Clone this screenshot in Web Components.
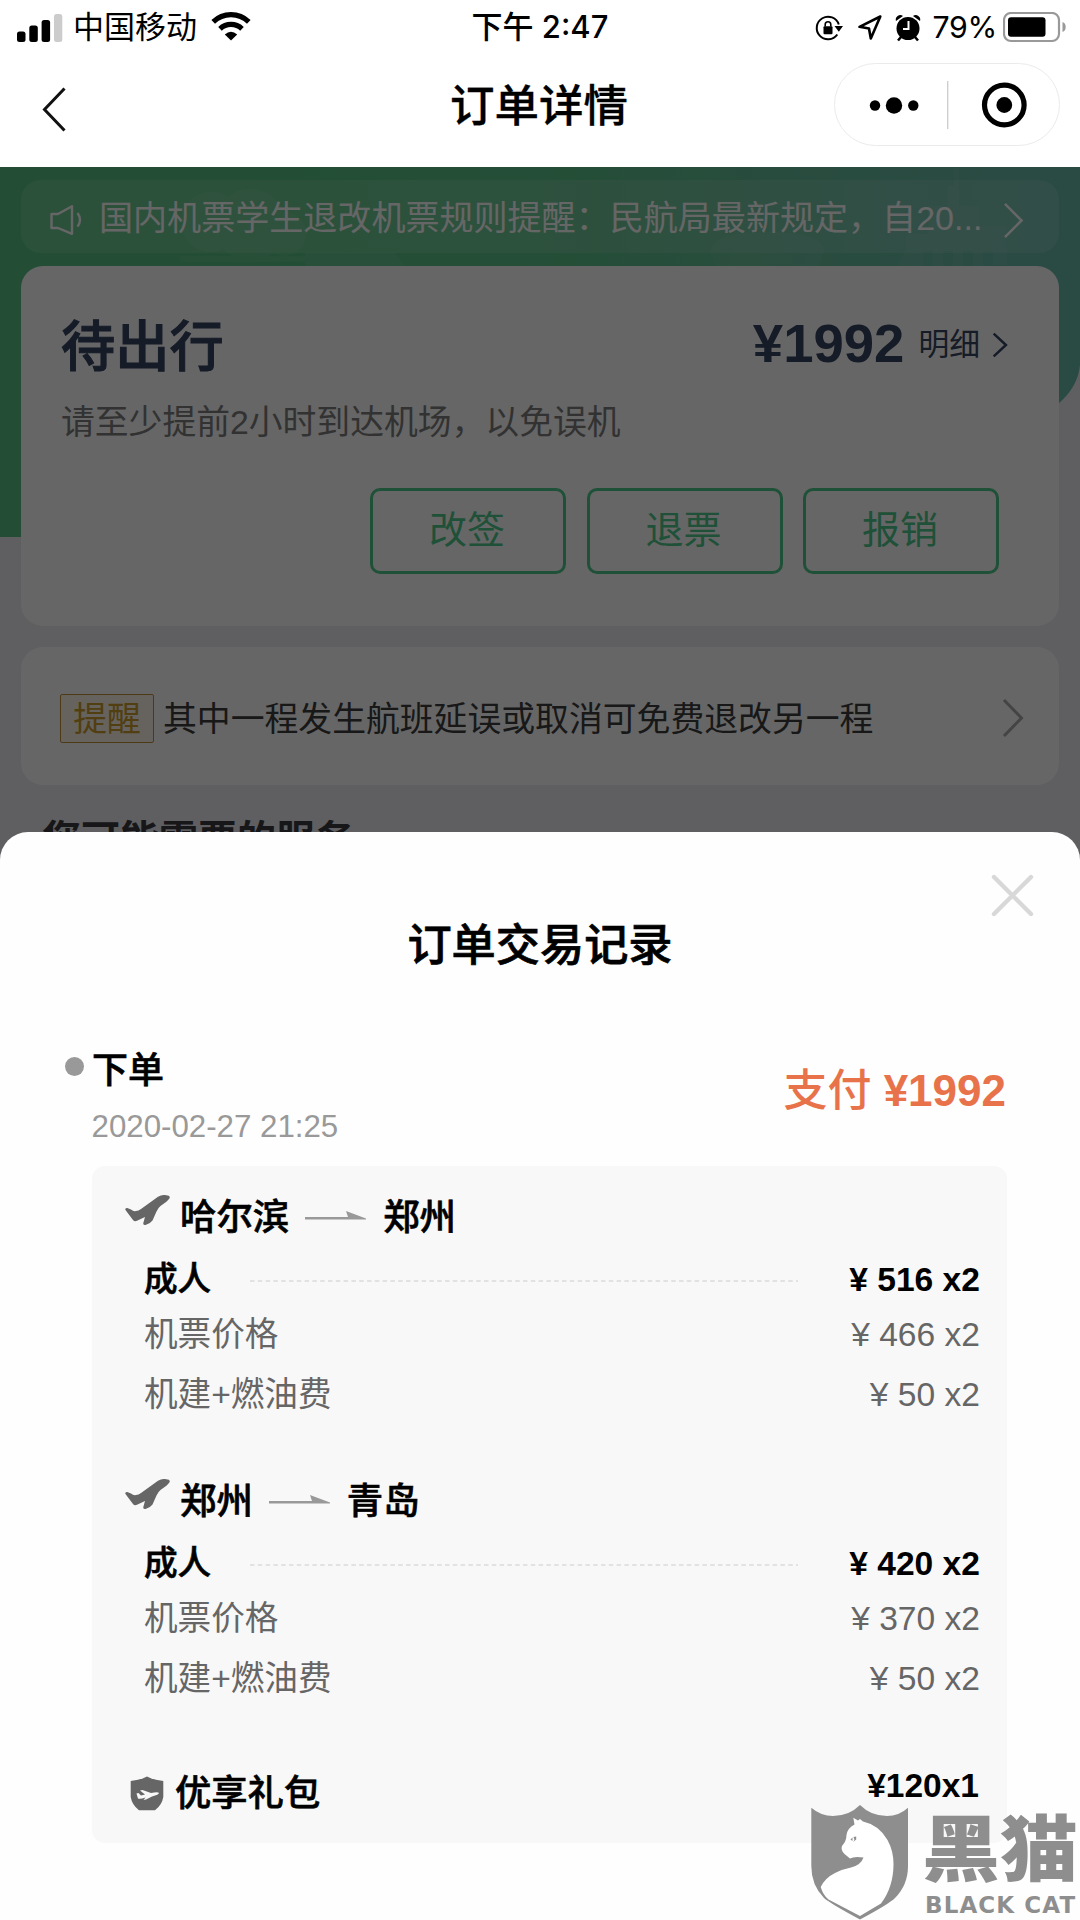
<!DOCTYPE html>
<html lang="zh-CN">
<head>
<meta charset="utf-8">
<title>订单详情</title>
<style>
html,body{margin:0;padding:0}
body{width:1080px;height:1920px;overflow:hidden;background:#fff;font-family:"Liberation Sans","Noto Sans CJK SC",sans-serif;color:#000}
</style>
</head>
<body>
<order-screen></order-screen>
<script>
const define = (name, html) => {
  const t = document.createElement('template');
  t.innerHTML = html;
  customElements.define(name, class extends HTMLElement {
    constructor() {
      super();
      this.attachShadow({ mode: 'open' }).appendChild(t.content.cloneNode(true));
    }
  });
};

define('status-bar', `
<style>
:host{display:flex;height:55px;box-sizing:border-box;padding:0 14px 0 17px;justify-content:space-between;font:400 31px/54px Inter,"Noto Sans CJK SC",sans-serif;background:#fff}
div{display:flex;align-items:center;flex:1;white-space:nowrap}
.c{justify-content:center;font-weight:500;margin-left:-3px}
.c span{margin-bottom:1px}
.r{justify-content:flex-end}
svg{display:block;flex:none}
.carrier{margin:0 14px 1px 10px}
.pct{font-size:30.300px;letter-spacing:-.3px;margin:0 6px 1px 12px}
</style>
<div>
<svg width="46" height="30" viewBox="0 0 46 30"><rect y="18.500" width="8.500" height="10.500" rx="2.500"/><rect x="12.300" y="12.500" width="8.500" height="16.500" rx="2.500"/><rect x="24.600" y="7" width="8.500" height="22" rx="2.500"/><rect x="37" y="1" width="8.300" height="28" rx="2.500" fill="#ccc"/></svg>
<span class="carrier">中国移动</span>
<svg style="margin-top:-4px" width="40" height="31" viewBox="0 0 40 31"><g fill="none" stroke="#000" stroke-width="5.200"><path d="M2.200 11.800A25.500 25.500 0 0 1 37.800 11.800"/><path d="M9 18.800A16 16 0 0 1 31 18.800"/></g><path d="M13.800 24.500Q20 19 26.200 24.500L20 30.500Z"/></svg>
</div>
<div class="c"><span>下午 2:47</span></div>
<div class="r">
<svg width="28" height="28" viewBox="0 0 28 28"><path d="M22.300 20.500A11.300 11.300 0 1 1 23.800 10.500" fill="none" stroke="#000" stroke-width="2"/><path d="M19.500 12h8.500l-4.200 5.800z"/><rect x="8.500" y="12.200" width="9" height="8" rx="1"/><path d="M10.200 12.500v-2a2.800 2.800 0 0 1 5.600 0v2" fill="none" stroke="#000" stroke-width="1.600"/></svg>
<svg style="margin-left:14px" width="26" height="27" viewBox="0 0 26 27"><path d="M23.300 2.500L2.500 12.800L12 14.500L13.800 24.500Z" fill="none" stroke="#000" stroke-width="2.600" stroke-linejoin="round"/></svg>
<svg style="margin-left:12px" width="26" height="28" viewBox="0 0 26 28"><circle cx="13" cy="14.500" r="11.500"/><path d="M1 7a4.500 4.500 0 0 1 7-5zM25 7a4.500 4.500 0 0 0-7-5z"/><path d="M6 23l-3 3.500M20 23l3 3.500" stroke="#000" stroke-width="2.500"/><path d="M13.500 7v8H8" fill="none" stroke="#fff" stroke-width="2"/></svg>
<span class="pct">79%</span>
<svg width="63" height="31" viewBox="0 0 63 31"><rect x="1" y="1" width="55" height="28" rx="7" fill="none" stroke="#999" stroke-width="2.200"/><rect x="5" y="5.200" width="37.500" height="19.500" rx="3"/><path d="M59.500 10q3.200 1 3.200 5t-3.200 5z" fill="#999"/></svg>
</div>`);

define('nav-bar', `
<style>
:host{display:flex;height:112px;box-sizing:border-box;padding:8px 20px 0 20px;background:#fff}
.side{flex:1;display:flex}
.back{align-items:flex-start;padding:24px 0 0 22px;margin-left:-22px}
.back svg{margin-left:22px}
h1{margin:0 1px 0 -1px;font-size:44.500px;line-height:88px;font-weight:500;-webkit-text-stroke:.3px currentColor}
.r{justify-content:flex-end}
.capsule{width:226px;height:83px;box-sizing:border-box;border:1.500px solid #ebebeb;border-radius:42px;display:flex;align-items:center;justify-content:center}
svg{display:block}
</style>
<div class="side back"><svg width="25" height="46" viewBox="0 0 25 46"><path d="M22.500 1.500L2.500 22.500L22.500 43.500" fill="none" stroke="#111" stroke-width="3"/></svg></div>
<h1><slot></slot></h1>
<div class="side r"><div class="capsule"><svg width="220" height="80" viewBox="0 0 220 80"><circle cx="38" cy="40.500" r="5.200"/><circle cx="57" cy="40.500" r="8.200"/><circle cx="76.300" cy="40.500" r="5.200"/><path d="M110.700 16v48" stroke="#ccc" stroke-width="1.300"/><circle cx="167.300" cy="40" r="19.800" fill="none" stroke="#000" stroke-width="5.200"/><circle cx="167.300" cy="40" r="7.900"/></svg></div></div>`);

define('chevron-icon', `
<style>:host{display:block;flex:none}svg{display:block;width:100%;height:100%;overflow:visible}path{stroke-width:var(--sw,2.500px)}</style>
<svg viewBox="0 0 20 36" preserveAspectRatio="none"><path d="M1 1L18.500 18L1 35" fill="none" stroke="currentColor" vector-effect="non-scaling-stroke"/></svg>`);

define('notice-bar', `
<style>
:host{display:flex;align-items:center;height:73px;box-sizing:border-box;border-radius:20px;padding:0 36px 0 28px;background:rgba(255,255,255,.12);color:#fff;font-size:34.050px;line-height:70px}
svg{flex:none;margin:6px 16px 0 0}
span{flex:1;white-space:nowrap;margin-top:3px}
chevron-icon{width:19px;height:35px;margin-top:8px}
</style>
<svg width="34" height="32" viewBox="0 0 34 32"><path d="M2.500 10h6.500L23 2.200v27.600L9 24H2.500z" fill="none" stroke="#fff" stroke-width="2.400" stroke-linejoin="round"/><path d="M28.500 9q5 6.800 0 13.600" fill="none" stroke="#fff" stroke-width="2.400"/></svg>
<span><slot></slot></span><chevron-icon></chevron-icon>`);

define('ghost-button', `
<style>:host{display:block;width:196px;height:86px;box-sizing:border-box;border:3px solid #4fc98c;border-radius:10px;color:#4fc98c;text-align:center;font-size:38px;line-height:78px;text-indent:-2px}</style><slot></slot>`);

define('trip-card', `
<style>
:host{display:flex;flex-direction:column;height:360px;box-sizing:border-box;border-radius:22px;background:#fff;padding:45px 40px 0 40px}
.top{display:flex;align-items:center;color:#364763;height:70px}
h2{margin:2px 0 0;flex:1;font-size:54.200px;line-height:70px;font-weight:500;-webkit-text-stroke:1px currentColor}
b{font-size:54.500px;line-height:70px;margin-top:-4px}
.d{font-size:30.800px;margin:-9px 13px 0 14px}
.top chevron-icon{width:14px;height:24px;margin:-3px 12px 0 0}
p{margin:13px 0 0;font-size:33.800px;line-height:56px;color:#7d7d7d}
.btns{display:flex;gap:20.500px;justify-content:flex-end;padding:38px 20px 0 0}
</style>
<div class="top"><h2>待出行</h2><b>¥1992</b><span class="d">明细</span><chevron-icon></chevron-icon></div>
<p>请至少提前2小时到达机场，以免误机</p>
<div class="btns"><ghost-button>改签</ghost-button><ghost-button>退票</ghost-button><ghost-button>报销</ghost-button></div>`);

define('tip-card', `
<style>
:host{display:flex;align-items:center;height:138px;box-sizing:border-box;border-radius:22px;background:#fff;padding:4px 36px 0 39px;font-size:33.850px;color:#3c3c3c}
i{font-style:normal;box-sizing:border-box;width:94px;height:49px;line-height:48px;border:1.500px solid #bd9438;color:#cb9c2c;background:#fff7ea;text-align:center;margin-right:9px;border-radius:2px}
span{flex:1;white-space:nowrap;margin-top:-4px}
chevron-icon{width:20px;height:38px;color:#aaa;--sw:3px}
</style>
<i>提醒</i><span><slot></slot></span><chevron-icon></chevron-icon>`);

define('order-page', `
<style>
:host{display:flow-root;position:relative;height:1753px;background:#eeeef6;overflow:hidden}
.bg{position:absolute;left:0;top:0}
.col{position:relative;display:flex;flex-direction:column;padding:13px 21px 0}
trip-card{margin-top:13px}
tip-card{margin-top:21px}
h3{margin:25px 0 0 21px;font-size:39px;line-height:60px;font-weight:600;color:#3a3a40}
</style>
<svg class="bg" width="1080" height="371" viewBox="0 0 1080 371"><defs><linearGradient id="g" x1="0" y1="0" x2="1" y2="0"><stop offset="0" stop-color="#57c384"/><stop offset=".5" stop-color="#5bc389"/><stop offset=".8" stop-color="#68bda2"/><stop offset="1" stop-color="#69bbab"/></linearGradient></defs>
<path d="M0 0H1080V198Q1078 220 1058 237Q980 300 840 330Q600 370 0 370Z" fill="url(#g)"/>
<g fill="#fff" opacity=".055"><circle cx="250" cy="58" r="36"/><circle cx="211" cy="55" r="30"/><circle cx="284" cy="67" r="22"/><path d="M180 89h130v6H180zM305 85h90l10 14H305zM710 85q0-20 57-20t57 20l-5 14H715zM954 1h5v38h20v20h27v25H906V67h22V39h20v-20h6zM905 84h102v14h-14v-14h-10v20h-10v-20h-10v20h-10v-20h-10v20h-10v-20h-10v20h-28z"/></g></svg>
<div class="col">
<notice-bar>国内机票学生退改机票规则提醒：民航局最新规定，自20...</notice-bar>
<trip-card></trip-card>
<tip-card>其中一程发生航班延误或取消可免费退改另一程</tip-card>
<h3>您可能需要的服务</h3>
</div>`);

define('fare-row', `
<style>
:host{display:flex;align-items:center;justify-content:space-between;font-size:33.600px;line-height:48px;color:#666;white-space:nowrap;padding:0 27px 0 52px}
:host([total]){color:#000;font-weight:500}
:host([total]) span{-webkit-text-stroke:.6px currentColor}
b{font-weight:inherit}
:host([total]) b{font-weight:700}
svg{display:none}
:host([total]) svg{display:block;margin:1px 12px 0 0}
</style>
<span><slot></slot></span><svg width="548" height="2"><path d="M0 1H548" stroke="#ccc" stroke-width="1" stroke-dasharray="4.500 3.300"/></svg><b><slot name="amount"></slot></b>`);

define('flight-leg', `
<style>
:host{display:flex;flex-direction:column}
.route{display:flex;align-items:center;height:64px;padding-left:33px;font-size:36.400px;font-weight:500}
.plane{margin:-13px 10px 0 0}
.arrow{margin:-2px 17px 0 16px}
.city{margin-top:-7px;-webkit-text-stroke:.6px currentColor}
svg{display:block;flex:none}
::slotted(fare-row:nth-of-type(1)){height:62px}
::slotted(fare-row:nth-of-type(2)){height:48px}
::slotted(fare-row:nth-of-type(3)){height:72px}
</style>
<div class="route">
<svg class="plane" width="45" height="31" viewBox="0 0 45 31"><path d="M.3 14.800Q0 13 2.300 13L6 14.500Q8.500 16.600 11 16Q13.500 15.800 16 14L33 1.800Q36.500 -.2 40 0L43.800 .8Q45.500 2 44.200 3.800L41.700 6.500L35.500 11Q33 13 31.500 16.500L27.500 25.500Q25 29 20.500 30Q18 30.300 18.300 28L20 22L12 25.800Q9.500 27 8 25Z" fill="#666"/></svg>
<span class="city"><slot name="from"></slot></span>
<svg class="arrow" width="61" height="10" viewBox="0 0 61 10"><path d="M0 6H43L41 0L61 7.500V8.500H0Z" fill="#999"/></svg>
<span class="city"><slot name="to"></slot></span>
</div>
<slot></slot>`);

define('gift-row', `
<style>
:host{display:flex;align-items:center;height:64px;padding:0 28px 0 38px;font-weight:500}
svg{display:block;margin-right:11px}
span{flex:1;font-size:36.300px;margin-top:-6px;-webkit-text-stroke:.6px currentColor}
b{font-size:33.500px;margin-top:-15px}
</style>
<svg width="34" height="35" viewBox="0 0 34 35"><path d="M17 .5Q23 4 33.300 5V21Q32 29 25 34.300H9Q2 29 .7 21V5Q11 4 17 .5Z" fill="#666"/><path d="M6.500 17.500L8.500 17L11 19.500L15 18.500L10 14.500L12.500 14L21 17Q28 15.500 29 17Q29 18.500 22 20.500L16 23.500L13.500 24L15.500 21.500Q10 23.500 8 22.500Z" fill="#f8f8f8"/></svg>
<span><slot></slot></span><b><slot name="amount"></slot></b>`);

define('trade-sheet', `
<style>
:host{display:flex;flex-direction:column;box-sizing:border-box;height:1088px;background:#fefefe;border-radius:28px 28px 0 0;padding:84px 73px 0 92px}
.close{position:absolute;right:46px;top:42px}
h2{margin:0 0 0 -19px;text-align:center;font-size:44.200px;line-height:60px;font-weight:500;-webkit-text-stroke:.7px currentColor}
.head{display:flex;margin-top:69px;height:110px;justify-content:space-between}
.what{display:flex;align-items:center;font-size:36px;line-height:52px;font-weight:500;margin-left:-27px;-webkit-text-stroke:.6px currentColor}
.what i{width:19px;height:19px;border-radius:50%;background:#999;margin:-9px 8px 0 0}
.when{font-size:31.250px;line-height:60px;color:#999;margin-left:-.5px}
.pay{color:#e8724a;font-size:44px;line-height:92px;font-weight:500;padding-right:1px;white-space:pre}
.pay b{font-weight:700}
.panel{display:flex;flex-direction:column;height:677px;box-sizing:border-box;margin-top:11px;border-radius:13px;background:#f8f8f8;padding-top:19px;gap:38px}
gift-row{margin-top:8px}
</style>
<svg class="close" width="43" height="43" viewBox="0 0 43 43"><path d="M3 3L40 40M40 3L3 40" stroke="#d8d8d8" stroke-width="4.400" stroke-linecap="round"/></svg>
<h2>订单交易记录</h2>
<div class="head"><div><div class="what"><i></i><span>下单</span></div><div class="when">2020-02-27 21:25</div></div><div class="pay">支付 <b>¥1992</b></div></div>
<div class="panel">
<flight-leg><span slot="from">哈尔滨</span><span slot="to">郑州</span>
<fare-row total>成人<span slot="amount">¥ 516 x2</span></fare-row>
<fare-row>机票价格<span slot="amount">¥ 466 x2</span></fare-row>
<fare-row>机建+燃油费<span slot="amount">¥ 50 x2</span></fare-row></flight-leg>
<flight-leg><span slot="from">郑州</span><span slot="to">青岛</span>
<fare-row total>成人<span slot="amount">¥ 420 x2</span></fare-row>
<fare-row>机票价格<span slot="amount">¥ 370 x2</span></fare-row>
<fare-row>机建+燃油费<span slot="amount">¥ 50 x2</span></fare-row></flight-leg>
<gift-row>优享礼包<span slot="amount">¥120x1</span></gift-row>
</div>`);

define('cat-mark', `
<style>
:host{display:flex;align-items:flex-start;color:#8f8e8f;gap:13px}
svg{display:block;flex:none}
.w{display:flex;flex-direction:column;padding-top:9px}
.zh{font:900 76.500px/73px "Liberation Sans","Noto Sans CJK SC",sans-serif;white-space:nowrap;transform:scale(1.02,.93);transform-origin:0 50%}
.en{font:700 23px/27px "DejaVu Sans",sans-serif;white-space:nowrap;margin:5px 0 0 3px;letter-spacing:1.100px}
</style>
<svg width="98" height="115" viewBox="0 0 98 115"><path d="M.3 2.700Q10 11 22 11Q38 11 49 0Q60 11 76 11Q88 11 97 2.700V61Q97 80 84 93Q78 99 49 114.500Q20 99 13 93Q.3 80 .3 61Z" fill="#8f8e8f"/><path d="M42.300 12.700L47 15.500L49 14L52 16.500Q68 20 76.500 35Q82.500 46 82.500 59Q82.500 82 70 98.500L49 111L17.500 94.500Q12 90 9.700 82Q14 73 24 68Q32 64 40 62.500Q50 60 52.500 52.500Q43 51 39 53.500L33.500 49Q29.500 45 31 41Q35.500 36 35.500 30Q36.500 23 43.500 19.500Z" fill="#fff"/><path d="M39.500 34.500l2-2v3.500zM42.500 32l2.700-.5v3l-3 2.500q2-2.500.3-5z" fill="#8f8e8f"/></svg>
<div class="w"><span class="zh">黑猫</span><span class="en">BLACK CAT</span></div>`);

define('order-screen', `
<style>
:host{display:flex;flex-direction:column;position:relative;width:1080px;height:1920px;overflow:hidden}
.dim{position:absolute;inset:167px 0 0;background:rgba(0,0,0,.6)}
trade-sheet{position:absolute;left:0;right:0;bottom:0}
cat-mark{position:absolute;left:811px;top:1805px}
</style>
<status-bar></status-bar>
<nav-bar>订单详情</nav-bar>
<order-page></order-page>
<div class="dim"></div>
<trade-sheet></trade-sheet>
<cat-mark></cat-mark>`);
</script>
</body>
</html>
